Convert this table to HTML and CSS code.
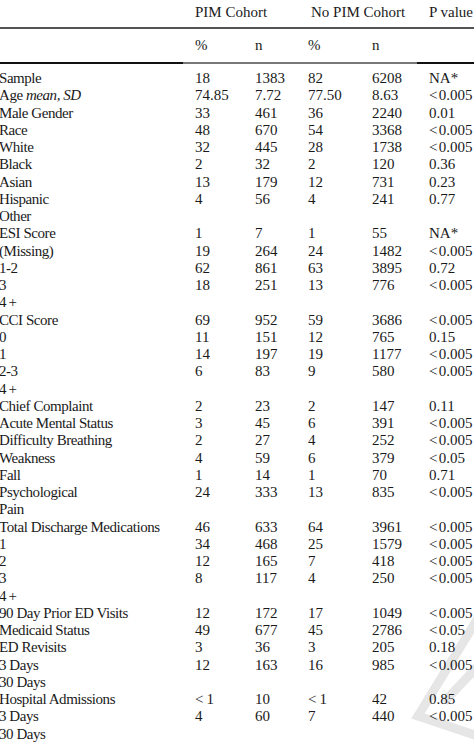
FILE: index.html
```html
<!DOCTYPE html>
<html>
<head>
<meta charset="utf-8">
<link rel="stylesheet" href="styles.css">
</head>
<body>
<svg class="watermark" width="80" height="140" viewBox="394 603 80 140">
  <path d="M478 618 L418 716 L478 736" fill="none" stroke="#e6e6e6" stroke-width="9" stroke-linejoin="miter"/>
  <path d="M478 666 L444 702" fill="none" stroke="#e6e6e6" stroke-width="9"/>
</svg>
<div class="table">
  <div class="row head1">
    <div></div>
    <div class="span2">PIM Cohort</div>
    <div class="span2 nopim">No PIM Cohort</div>
    <div>P value</div>
  </div>
  <div class="rule1"></div>
  <div class="row head2">
    <div></div>
    <div>%</div><div>n</div><div>%</div><div>n</div><div></div>
  </div>
  <div class="rule2"><span class="seg black a"></span><span class="seg gray"></span><span class="seg black c"></span></div>
  <div class="body">
    <div class="row"><div>Sample</div><div>18</div><div>1383</div><div>82</div><div>6208</div><div>NA*</div></div>
    <div class="row"><div>Age <i>mean, SD</i></div><div>74.85</div><div>7.72</div><div>77.50</div><div>8.63</div><div>&lt;&#8202;0.005</div></div>
    <div class="row"><div>Male Gender</div><div>33</div><div>461</div><div>36</div><div>2240</div><div>0.01</div></div>
    <div class="row"><div>Race</div><div>48</div><div>670</div><div>54</div><div>3368</div><div>&lt;&#8202;0.005</div></div>
    <div class="row"><div>White</div><div>32</div><div>445</div><div>28</div><div>1738</div><div>&lt;&#8202;0.005</div></div>
    <div class="row"><div>Black</div><div>2</div><div>32</div><div>2</div><div>120</div><div>0.36</div></div>
    <div class="row"><div>Asian</div><div>13</div><div>179</div><div>12</div><div>731</div><div>0.23</div></div>
    <div class="row"><div>Hispanic</div><div>4</div><div>56</div><div>4</div><div>241</div><div>0.77</div></div>
    <div class="row"><div>Other</div><div></div><div></div><div></div><div></div><div></div></div>
    <div class="row"><div>ESI Score</div><div>1</div><div>7</div><div>1</div><div>55</div><div>NA*</div></div>
    <div class="row"><div>(Missing)</div><div>19</div><div>264</div><div>24</div><div>1482</div><div>&lt;&#8202;0.005</div></div>
    <div class="row"><div>1-2</div><div>62</div><div>861</div><div>63</div><div>3895</div><div>0.72</div></div>
    <div class="row"><div>3</div><div>18</div><div>251</div><div>13</div><div>776</div><div>&lt;&#8202;0.005</div></div>
    <div class="row"><div>4&thinsp;+</div><div></div><div></div><div></div><div></div><div></div></div>
    <div class="row"><div>CCI Score</div><div>69</div><div>952</div><div>59</div><div>3686</div><div>&lt;&#8202;0.005</div></div>
    <div class="row"><div>0</div><div>11</div><div>151</div><div>12</div><div>765</div><div>0.15</div></div>
    <div class="row"><div>1</div><div>14</div><div>197</div><div>19</div><div>1177</div><div>&lt;&#8202;0.005</div></div>
    <div class="row"><div>2-3</div><div>6</div><div>83</div><div>9</div><div>580</div><div>&lt;&#8202;0.005</div></div>
    <div class="row"><div>4&thinsp;+</div><div></div><div></div><div></div><div></div><div></div></div>
    <div class="row"><div>Chief Complaint</div><div>2</div><div>23</div><div>2</div><div>147</div><div>0.11</div></div>
    <div class="row"><div>Acute Mental Status</div><div>3</div><div>45</div><div>6</div><div>391</div><div>&lt;&#8202;0.005</div></div>
    <div class="row"><div>Difficulty Breathing</div><div>2</div><div>27</div><div>4</div><div>252</div><div>&lt;&#8202;0.005</div></div>
    <div class="row"><div>Weakness</div><div>4</div><div>59</div><div>6</div><div>379</div><div>&lt;&#8202;0.05</div></div>
    <div class="row"><div>Fall</div><div>1</div><div>14</div><div>1</div><div>70</div><div>0.71</div></div>
    <div class="row"><div>Psychological</div><div>24</div><div>333</div><div>13</div><div>835</div><div>&lt;&#8202;0.005</div></div>
    <div class="row"><div>Pain</div><div></div><div></div><div></div><div></div><div></div></div>
    <div class="row"><div>Total Discharge Medications</div><div>46</div><div>633</div><div>64</div><div>3961</div><div>&lt;&#8202;0.005</div></div>
    <div class="row"><div>1</div><div>34</div><div>468</div><div>25</div><div>1579</div><div>&lt;&#8202;0.005</div></div>
    <div class="row"><div>2</div><div>12</div><div>165</div><div>7</div><div>418</div><div>&lt;&#8202;0.005</div></div>
    <div class="row"><div>3</div><div>8</div><div>117</div><div>4</div><div>250</div><div>&lt;&#8202;0.005</div></div>
    <div class="row"><div>4&thinsp;+</div><div></div><div></div><div></div><div></div><div></div></div>
    <div class="row"><div>90 Day Prior ED Visits</div><div>12</div><div>172</div><div>17</div><div>1049</div><div>&lt;&#8202;0.005</div></div>
    <div class="row"><div>Medicaid Status</div><div>49</div><div>677</div><div>45</div><div>2786</div><div>&lt;&#8202;0.05</div></div>
    <div class="row"><div>ED Revisits</div><div>3</div><div>36</div><div>3</div><div>205</div><div>0.18</div></div>
    <div class="row"><div>3 Days</div><div>12</div><div>163</div><div>16</div><div>985</div><div>&lt;&#8202;0.005</div></div>
    <div class="row"><div>30 Days</div><div></div><div></div><div></div><div></div><div></div></div>
    <div class="row"><div>Hospital Admissions</div><div>&lt;&thinsp;1</div><div>10</div><div>&lt;&thinsp;1</div><div>42</div><div>0.85</div></div>
    <div class="row"><div>3 Days</div><div>4</div><div>60</div><div>7</div><div>440</div><div>&lt;&#8202;0.005</div></div>
    <div class="row"><div>30 Days</div><div></div><div></div><div></div><div></div><div></div></div>
  </div>
</div>
</body>
</html>
```

FILE: styles.css
```css
html, body {
  margin: 0;
  padding: 0;
  background: #fff;
  overflow: hidden;
}
body {
  width: 474px;
  height: 743px;
  position: relative;
  font-family: "Liberation Serif", "Times New Roman", serif;
  font-size: 15px;
  color: #1a1a1a;
}
.table {
  position: relative;
  width: 474px;
}
.row {
  display: grid;
  grid-template-columns: 195px 60px 53px 64px 57px 45px;
  white-space: nowrap;
}
.head1 {
  height: 27px;
  line-height: 24px;
}
.head1 .span2 {
  grid-column: span 2;
}
.head1 .nopim {
  padding-left: 3px;
}
.rule1 {
  height: 2px;
  background: #555;
}
.head2 {
  height: 33px;
  line-height: 33px;
}
.rule2 {
  display: flex;
  height: 2px;
}
.seg.black { background: #111; }
.seg.gray { background: #777; flex: 1; }
.seg.a { width: 183px; }
.seg.c { width: 57px; }
.body {
  padding-top: 6px;
}
.body .row {
  height: 17.26px;
  line-height: 17.26px;
}
.body .row > div:first-child {
  margin-left: -1px;
  letter-spacing: -0.45px;
}
.watermark {
  position: absolute;
  right: 0;
  bottom: 0;
}
```
